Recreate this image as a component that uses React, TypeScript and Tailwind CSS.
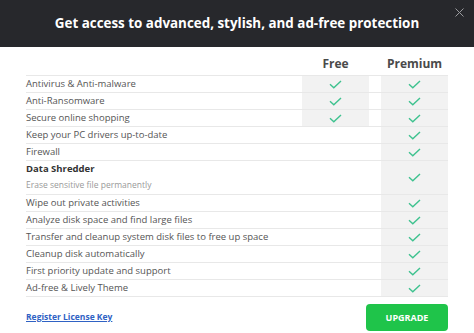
import React from 'react'

const font = { fontFamily: '"Open Sans", "Noto Sans", sans-serif' }

type Row = {
  label: string
  free?: boolean
  kind?: 'normal' | 'title'
  sub?: string
}

const rows: Row[] = [
  { label: 'Antivirus & Anti-malware', free: true },
  { label: 'Anti-Ransomware', free: true },
  { label: 'Secure online shopping', free: true },
  { label: 'Keep your PC drivers up-to-date' },
  { label: 'Firewall' },
  { label: 'Data Shredder', kind: 'title', sub: 'Erase sensitive file permanently' },
  { label: 'Wipe out private activities' },
  { label: 'Analyze disk space and find large files' },
  { label: 'Transfer and cleanup system disk files to free up space' },
  { label: 'Cleanup disk automatically' },
  { label: 'First priority update and support' },
  { label: 'Ad-free & Lively Theme' },
]

function Check() {
  return (
    <svg width="13" height="9" viewBox="0 0 13 9" fill="none">
      <path d="M1 4.2 L4.8 7.8 L12 1" stroke="#3ec28f" strokeWidth="1.4" />
    </svg>
  )
}

export default function App() {
  return (
    <div className="w-[474px] h-[333px] bg-white overflow-hidden" style={font}>
      {/* 標題列 */}
      <div className="relative h-[47px] bg-[#27282c] flex items-center justify-center">
        <h1 className="text-white font-bold text-[13.4px]">
          Get access to advanced, stylish, and ad-free protection
        </h1>
        <svg className="absolute right-[10px] top-[8px]" width="9" height="9" viewBox="0 0 9 9">
          <path d="M0.5 0.5 L8.5 8.5 M8.5 0.5 L0.5 8.5" stroke="#9a9b9e" strokeWidth="1" />
        </svg>
      </div>

      <div className="pl-[26px] pr-[26px]">
        {/* 欄位標題 */}
        <div className="flex h-[28px] items-end pb-[2px] text-[12px] font-bold text-[#4a4a4a]">
          <div className="w-[276px]" />
          <div className="w-[67px] text-center">Free</div>
          <div className="w-[12px]" />
          <div className="w-[67px] text-center">Premium</div>
        </div>

        {/* 功能列表 */}
        <div className="border-t border-[#e8e8e8]">
          {rows.map((r) => (
            <div key={r.label} className="flex border-b border-[#e8e8e8]">
              <div className="w-[276px] flex flex-col">
                <div
                  className={`h-[16px] flex items-center text-[9.5px] ${
                    r.kind === 'title' ? 'font-bold text-[#333]' : 'text-[#555]'
                  }`}
                >
                  {r.label}
                </div>
                {r.sub && (
                  <div className="h-[17px] flex items-center text-[8.5px] text-[#9a9a9a]">
                    {r.sub}
                  </div>
                )}
              </div>
              <div
                className={`w-[67px] flex items-center justify-center ${
                  r.free ? 'bg-[#f2f2f2]' : ''
                }`}
              >
                {r.free && <Check />}
              </div>
              <div className="w-[12px]" />
              <div className="w-[67px] flex items-center justify-center bg-[#f2f2f2]">
                <Check />
              </div>
            </div>
          ))}
        </div>

        {/* 底部 */}
        <div className="flex items-center justify-between mt-[7px]">
          <a href="#" className="text-[8.5px] font-bold text-[#2f62c4] underline">
            Register License Key
          </a>
          <button className="w-[82px] h-[27px] rounded-[4px] bg-[#1fc44a] text-white text-[9px] font-bold">
            UPGRADE
          </button>
        </div>
      </div>
    </div>
  )
}
